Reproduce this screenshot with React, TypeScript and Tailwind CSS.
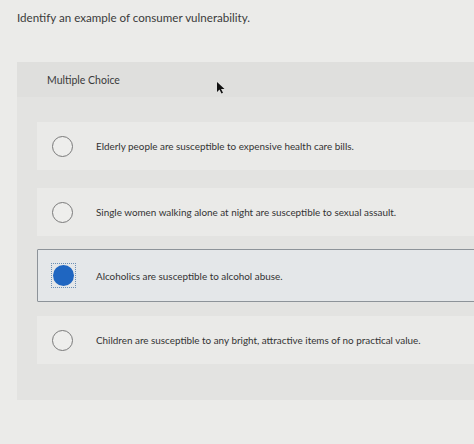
import React from "react";

const options = [
  "Elderly people are susceptible to expensive health care bills.",
  "Single women walking alone at night are susceptible to sexual assault.",
  "Alcoholics are susceptible to alcohol abuse.",
  "Children are susceptible to any bright, attractive items of no practical value.",
];

const margins = ["mt-0", "mt-[18px]", "mt-[13px]", "mt-[14px]"];

export default function App() {
  return (
    <div
      className="w-[474px] h-[444px] overflow-hidden bg-[#ebebe9] text-[#3a3a3a]"
      style={{ fontFamily: "Lato, 'Open Sans', sans-serif" }}
    >
      <div className="pl-[17px] pt-[9px] text-[11.6px] leading-[17px] text-[#3b3b3b]">
        Identify an example of consumer vulnerability.
      </div>
      <div className="ml-[17px] mt-[36px] w-[480px] bg-[#e3e3e1] pb-[36px]">
        <div className="h-[35px] bg-[#dfdfdd] pl-[30px] pt-[11px] text-[10.5px] leading-[14px] text-[#3a3a3a] relative">
          Multiple Choice
          <svg className="absolute left-[200px] top-[20px]" width="8" height="12" viewBox="0 0 8 12">
            <path d="M0 0 L0 10 L2.5 7.5 L4.5 11.5 L6 10.8 L4 7 L7.5 7 Z" fill="#111" />
          </svg>
        </div>
        <div className="flex flex-col pl-[20px] pt-[25px]">
          {options.map((t, i) => {
            const sel = i === 2;
            return (
              <div
                key={i}
                className={
                  (sel
                    ? "h-[53px] flex items-center border border-[#8d9399] bg-[#e4e7e9] rounded-[1px] pl-[13px] "
                    : "h-[48px] flex items-center bg-[#eaeae8] pl-[15px] ") + margins[i]
                }
              >
                {sel ? (
                  <div className="w-[25px] h-[25px] border border-dotted border-[#6b8fb5] flex items-center justify-center">
                    <div className="w-[21px] h-[21px] rounded-full bg-[#1f66c1]" />
                  </div>
                ) : (
                  <div className="w-[21px] h-[21px] rounded-full border-[1.5px] border-[#7a7a7a] bg-[#eeeeec]" />
                )}
                <div className={"text-[9.9px] leading-[14px] text-[#333] " + (sel ? "ml-[20px]" : "ml-[23px]")}>{t}</div>
              </div>
            );
          })}
        </div>
      </div>
    </div>
  );
}
